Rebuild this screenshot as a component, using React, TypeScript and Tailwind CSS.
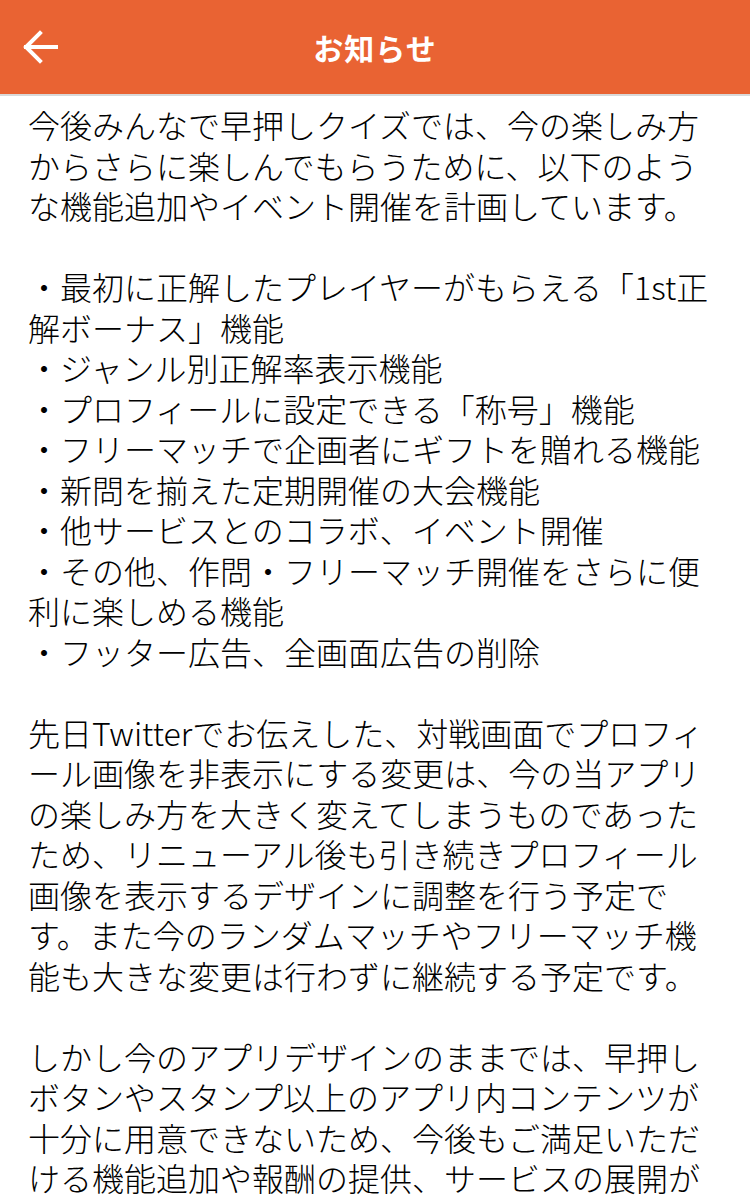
import React from 'react';

const lines = [
  '今後みんなで早押しクイズでは、今の楽しみ方',
  'からさらに楽しんでもらうために、以下のよう',
  'な機能追加やイベント開催を計画しています。',
  '',
  '・最初に正解したプレイヤーがもらえる「1st正',
  '解ボーナス」機能',
  '・ジャンル別正解率表示機能',
  '・プロフィールに設定できる「称号」機能',
  '・フリーマッチで企画者にギフトを贈れる機能',
  '・新問を揃えた定期開催の大会機能',
  '・他サービスとのコラボ、イベント開催',
  '・その他、作問・フリーマッチ開催をさらに便',
  '利に楽しめる機能',
  '・フッター広告、全画面広告の削除',
  '',
  '先日Twitterでお伝えした、対戦画面でプロフィ',
  'ール画像を非表示にする変更は、今の当アプリ',
  'の楽しみ方を大きく変えてしまうものであった',
  'ため、リニューアル後も引き続きプロフィール',
  '画像を表示するデザインに調整を行う予定で',
  'す。また今のランダムマッチやフリーマッチ機',
  '能も大きな変更は行わずに継続する予定です。',
  '',
  'しかし今のアプリデザインのままでは、早押し',
  'ボタンやスタンプ以上のアプリ内コンテンツが',
  '十分に用意できないため、今後もご満足いただ',
  'ける機能追加や報酬の提供、サービスの展開が',
];

export default function App() {
  return (
    <div className="h-[1200px] overflow-hidden bg-white font-['Noto_Sans_CJK_JP',sans-serif]">
      {/* Header */}
      <div className="h-[96px] bg-[#e96333] border-b-2 border-[#d9d9d9] flex items-center relative">
        <button className="absolute left-[22px] top-[30px] p-0">
          <svg width="38" height="36" viewBox="0 0 38 36" fill="none" stroke="white" strokeWidth={4} strokeLinecap="square">
            <path d="M4 17h30" />
            <path d="M18 3L4 17l14 14" />
          </svg>
        </button>
        <h1 className="flex-1 text-center text-white text-[30px] font-bold tracking-[1px]">お知らせ</h1>
      </div>

      {/* Body */}
      <div className="px-[28px] pt-[8px] text-[32px] leading-[40.5px] font-light text-black">
        {lines.map((l, i) => (
          <div key={i} className="whitespace-nowrap">{l || '\u00a0'}</div>
        ))}
      </div>
    </div>
  );
}
